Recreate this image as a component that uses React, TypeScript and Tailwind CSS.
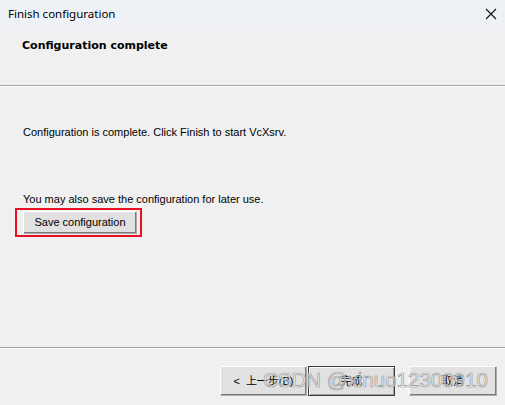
import React from "react";

const SANS = "font-['Liberation_Sans','Noto_Sans_CJK_SC',sans-serif]";

function WinButton({
  children,
  isDefault = false,
  className = "",
}: {
  children: React.ReactNode;
  isDefault?: boolean;
  className?: string;
}) {
  return (
    <button
      className={`flex shrink-0 items-center justify-center bg-[#e1e1e1] text-[11px] text-black ${
        isDefault
          ? "border border-[#3c3c3c] shadow-[inset_1px_1px_0_#ffffff,inset_-1px_-1px_0_#a0a0a0]"
          : "border border-[#adadad] border-t-white border-l-white shadow-[inset_-1px_-1px_0_#7a7a7a]"
      } ${className}`}
    >
      {children}
    </button>
  );
}

export default function App() {
  return (
    <div className={`relative flex h-[405px] w-[505px] flex-col overflow-hidden bg-[#f0f0f0] ${SANS}`}>
      {/* title bar */}
      <div className="flex h-[27px] shrink-0 items-center justify-between bg-[#eef2f6] pl-2 pr-[7px]">
        <span className="font-['Noto_Sans',sans-serif] text-[11.5px] text-black">
          Finish configuration
        </span>
        <svg width="12" height="12" viewBox="0 0 12 12" className="mr-[1px]">
          <path d="M1 1 L11 11 M11 1 L1 11" stroke="#111" strokeWidth="1.1" />
        </svg>
      </div>

      {/* header */}
      <div className="h-[58px] shrink-0 pl-[22px] pt-[11px]">
        <h1 className="font-['DejaVu_Sans',sans-serif] text-[11px] font-bold text-black">
          Configuration complete
        </h1>
      </div>
      <div className="h-px shrink-0 bg-[#a0a0a0]" />
      <div className="h-px shrink-0 bg-white" />

      {/* body */}
      <div className="flex flex-1 flex-col pl-[23px] text-[11px] text-black">
        <p className="mt-[37px]">Configuration is complete. Click Finish to start VcXsrv.</p>
        <p className="mt-[50px]">You may also save the configuration for later use.</p>
        <div className="-ml-[8px] mt-[1px] w-[127px] border-2 border-[#e81123] px-[6px] py-[1px]">
          <WinButton className="h-[23px] w-[114px]">Save configuration</WinButton>
        </div>
      </div>

      <div className="h-px shrink-0 bg-[#a0a0a0]" />
      <div className="h-px shrink-0 bg-white" />

      {/* footer buttons */}
      <div className="flex h-[56px] shrink-0 items-start pt-[17px]">
        <div className="ml-[220px] flex">
          <WinButton className="h-[30px] w-[87px] gap-[6px]">
            <span>&lt;</span>
            <span>上一步(B)</span>
          </WinButton>
          <WinButton isDefault className="ml-px h-[30px] w-[87px]">
            完成
          </WinButton>
        </div>
        <WinButton className="ml-[14px] h-[30px] w-[88px]">取消</WinButton>
      </div>

      {/* watermark */}
      <div className="pointer-events-none absolute left-[263px] top-[369px] whitespace-nowrap font-['Liberation_Sans',sans-serif] text-[20.5px] leading-[22px] text-[#ffffff]/60 [-webkit-text-stroke:0.7px_#9a9a9a]">
        CSDN @xinuo12300910
      </div>
    </div>
  );
}
